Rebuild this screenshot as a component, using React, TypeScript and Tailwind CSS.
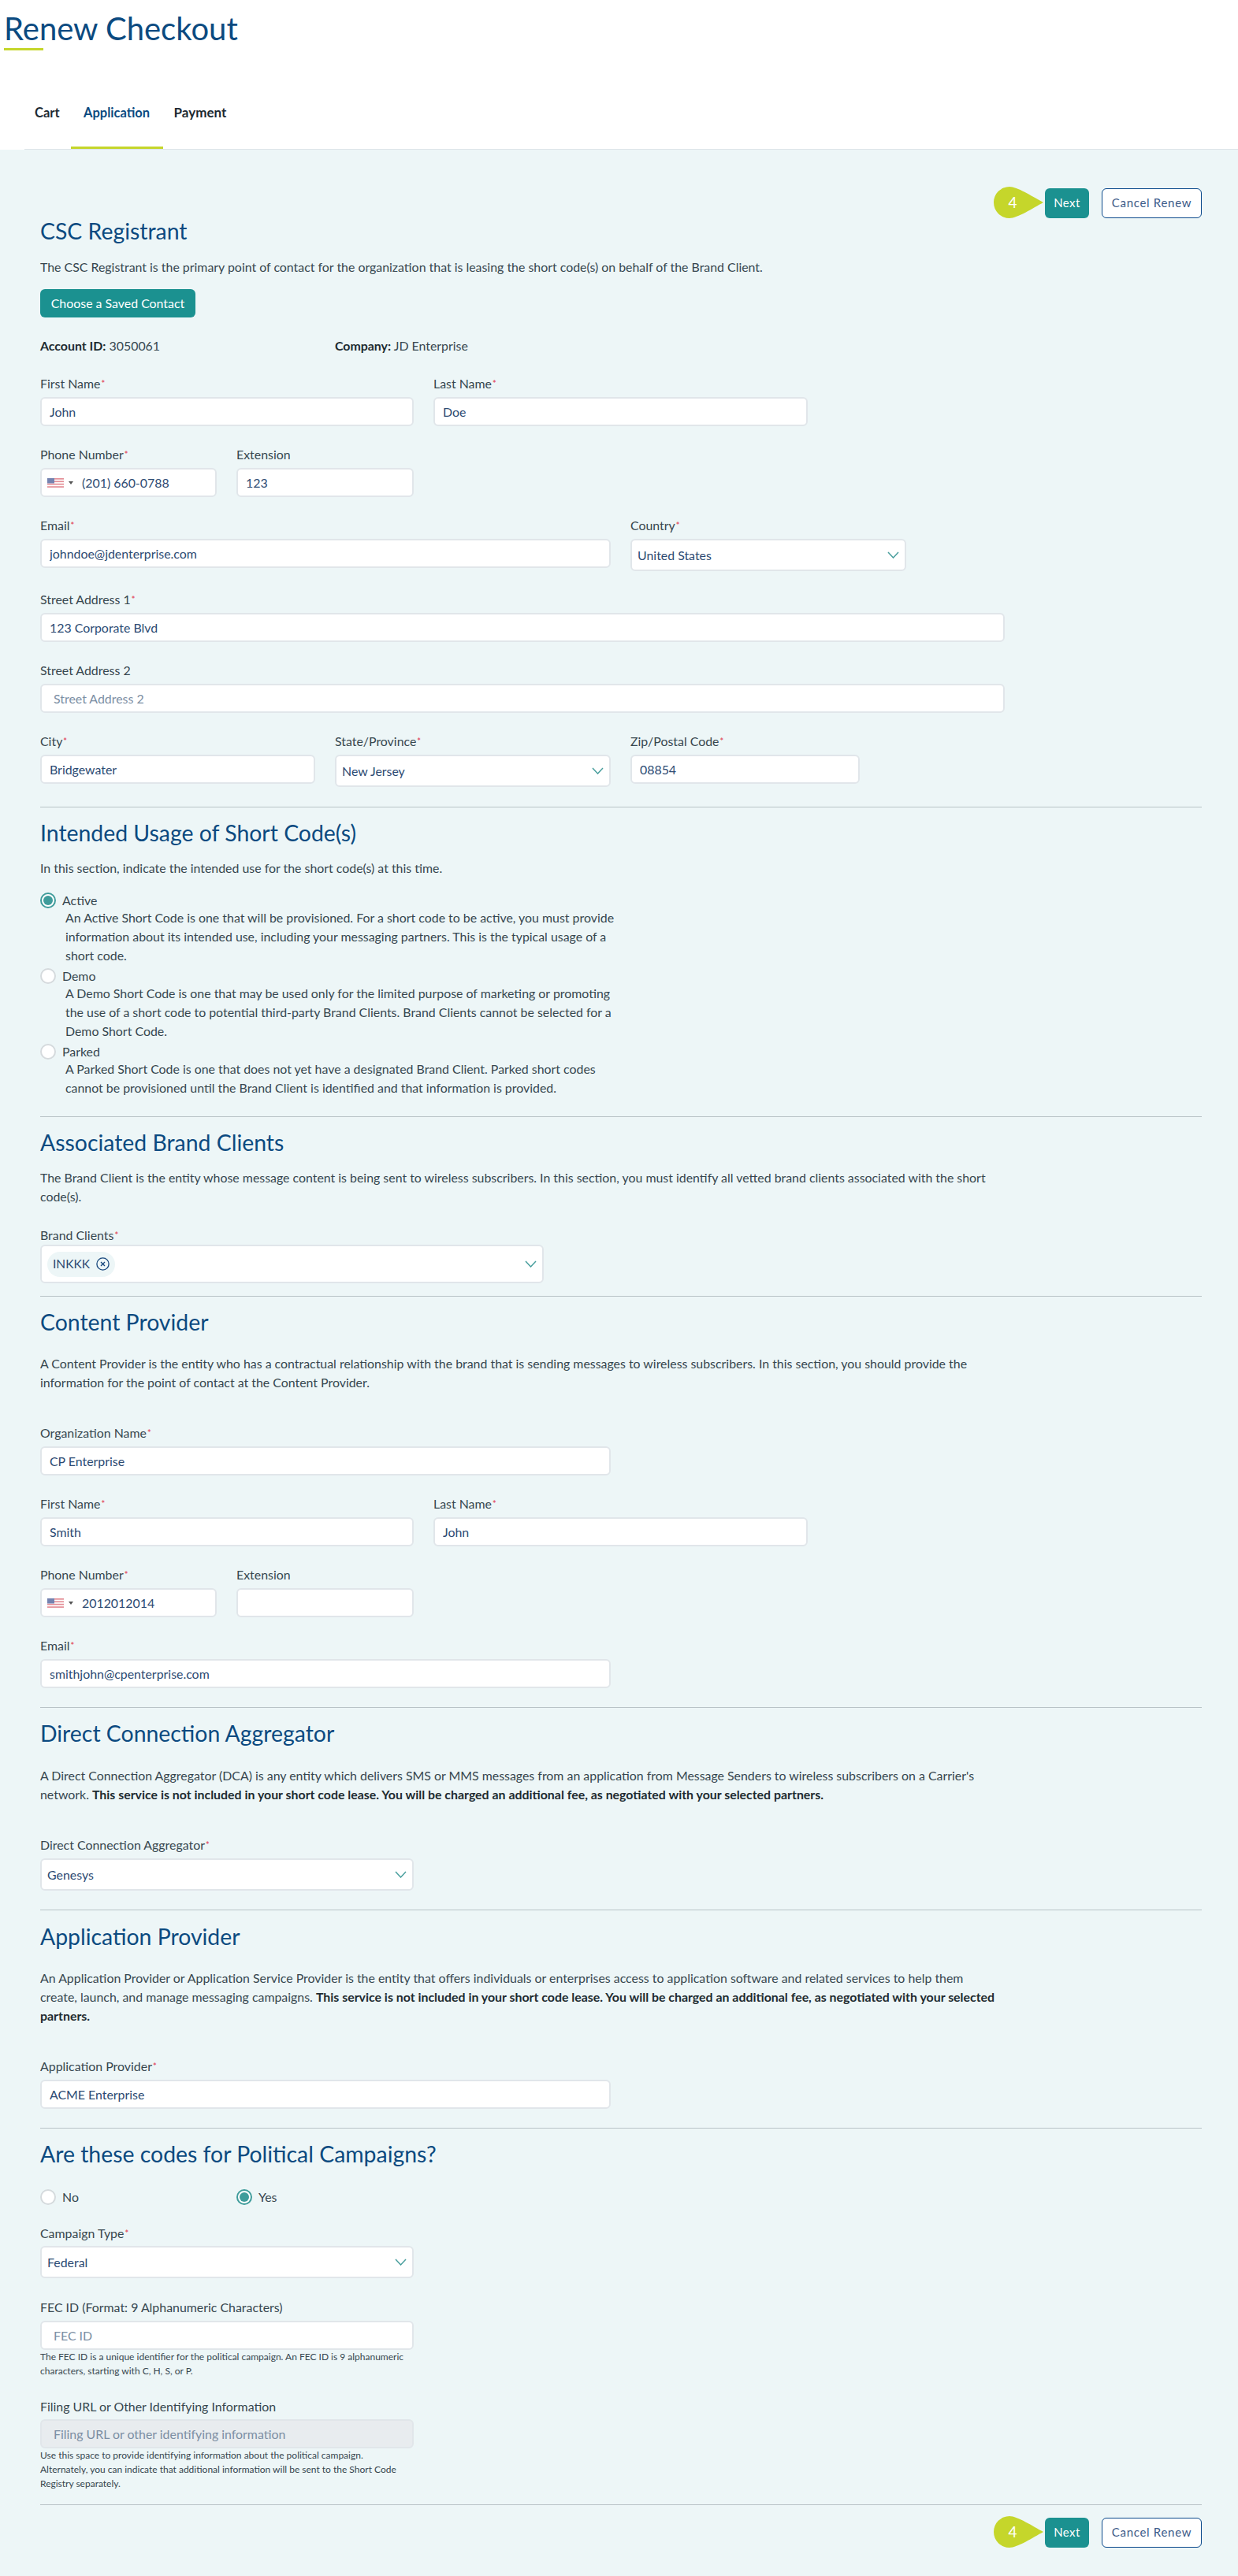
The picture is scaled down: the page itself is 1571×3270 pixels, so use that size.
import React from "react";

const Req = () => <span className="text-[#e2566b] text-[11px] font-bold align-[2px] ml-[1px]">*</span>;

function Chevron() {
  return (
    <svg width="15" height="9" viewBox="0 0 15 9" fill="none" className="shrink-0">
      <polyline points="1,1 7.5,8 14,1" stroke="#4a9f9e" strokeWidth="1.5" />
    </svg>
  );
}

function Label({ text, req, gap = "mb-[7px]" }: { text: string; req?: boolean; gap?: string }) {
  return (
    <div className={`h-5 leading-5 text-[15.9px] text-[#37474f] whitespace-nowrap ${gap}`}>
      {text}
      {req && <Req />}
    </div>
  );
}

function Input({ value, placeholder, disabled }: { value?: string; placeholder?: string; disabled?: boolean }) {
  return (
    <input
      readOnly
      value={value ?? ""}
      placeholder={placeholder}
      className={`block w-full h-[37px] rounded-[6px] border-2 border-[#e1e6ea] text-[15.9px] text-[#2c4a72] outline-none placeholder:text-[#7c8ea3] ${
        placeholder ? "pl-[15px]" : "pl-[10px]"
      } ${disabled ? "bg-[#e8ecef]" : "bg-white"}`}
    />
  );
}

function Select({ value }: { value: string }) {
  return (
    <div className="flex items-center justify-between h-[41px] rounded-[6px] border-2 border-[#e1e6ea] bg-white pl-[7px] pr-[7px] text-[15.9px] text-[#2c4a72]">
      <span>{value}</span>
      <Chevron />
    </div>
  );
}

function Phone({ value }: { value: string }) {
  return (
    <div className="flex items-center h-[37px] rounded-[6px] border-2 border-[#e1e6ea] bg-white pl-[7px] text-[15.9px] text-[#2c4a72]">
      <svg width="21" height="12" viewBox="0 0 21 12" className="shrink-0 opacity-70">
        <rect width="21" height="12" fill="#fff" />
        <rect width="21" height="1.7" y="0" fill="#d9606c" />
        <rect width="21" height="1.7" y="3.4" fill="#d9606c" />
        <rect width="21" height="1.7" y="6.8" fill="#d9606c" />
        <rect width="21" height="1.7" y="10.2" fill="#d9606c" />
        <rect width="9" height="6.5" fill="#3c4f8f" />
      </svg>
      <svg width="6" height="4" viewBox="0 0 6 4" className="ml-[6px] shrink-0">
        <polygon points="0,0 6,0 3,4" fill="#555" />
      </svg>
      <span className="ml-[11px]">{value}</span>
    </div>
  );
}

function Field({ w, label, req, children }: { w: string; label: string; req?: boolean; children: React.ReactNode }) {
  return (
    <div className={w}>
      <Label text={label} req={req} />
      {children}
    </div>
  );
}

function Row({ children, mb = "mb-[26px]" }: { children: React.ReactNode; mb?: string }) {
  return <div className={`flex items-start gap-[25px] ${mb}`}>{children}</div>;
}

function Divider({ mt = "" }: { mt?: string }) {
  return <div className={`h-px bg-[#b9c3c7] ${mt}`} />;
}

function Heading({ children, mt = "mt-[17px]" }: { children: React.ReactNode; mt?: string }) {
  return <h2 className={`h-[30px] leading-[30px] text-[28.4px] text-[#0b4a80] whitespace-nowrap ${mt}`}>{children}</h2>;
}

function Para({ children, mt }: { children: React.ReactNode; mt: string }) {
  return <p className={`leading-6 text-[15.9px] text-[#37474f] whitespace-nowrap ${mt}`}>{children}</p>;
}

function Radio({ on }: { on?: boolean }) {
  return (
    <span
      className={`flex items-center justify-center w-5 h-5 rounded-full border-2 bg-white shrink-0 ${
        on ? "border-[#3f9c9b]" : "border-[#d5dadd]"
      }`}
    >
      {on && <span className="block w-3 h-3 rounded-full bg-[#3f9c9b]" />}
    </span>
  );
}

function RadioLine({ label, on, children, mt = "" }: { label: string; on?: boolean; children: React.ReactNode; mt?: string }) {
  return (
    <div className={mt}>
      <div className="flex items-center h-[21px] gap-2 text-[15.9px] text-[#37474f]">
        <Radio on={on} />
        <span>{label}</span>
      </div>
      <p className="pl-[32px] leading-6 text-[15.9px] text-[#37474f] whitespace-nowrap">{children}</p>
    </div>
  );
}

function Actions({ mt }: { mt: string }) {
  return (
    <div className={`flex justify-end items-center ${mt}`}>
      <div className="relative w-[63px] h-10 mr-[2px] -mt-[1px]">
        <svg width="63" height="40" viewBox="0 0 63 40">
          <path d="M20 0 C30 0 50 13 63 20 C50 27 30 40 20 40 A20 20 0 0 1 20 0 Z" fill="#c5d62b" />
        </svg>
        <span className="absolute left-[17px] top-0 w-[14px] h-10 leading-10 text-center text-[19px] text-white">4</span>
      </div>
      <button className="w-14 h-[38px] rounded-[6px] bg-[#1b9190] text-white text-[15px] tracking-[0.4px]">Next</button>
      <button className="w-[127px] h-[38px] ml-4 rounded-[6px] border border-[#0b4a8c] bg-white text-[#3c5a88] text-[15px] tracking-[0.7px]">
        Cancel Renew
      </button>
    </div>
  );
}

export default function App() {
  return (
    <div className="w-[1571px] bg-white font-['Lato','Liberation_Sans',sans-serif]">
      <header className="h-[190px] pt-3">
        <h1 className="pl-[5px] h-12 leading-[48px] text-[40px] text-[#0b4a80] whitespace-nowrap">Renew Checkout</h1>
        <div className="ml-[5px] mt-[1px] w-[50px] h-[3px] bg-[#c5d62b]" />
        <nav className="flex mt-[56px] ml-[31px] h-[70px] border-b border-[#dde4e8]">
          <a className="h-[69px] pt-[11px] pl-[13px] pr-[14px] leading-6 text-[16.5px] font-bold text-[#1c2a33] border-b-[3px] border-transparent">Cart</a>
          <a className="h-[69px] pt-[11px] w-[117px] text-center leading-6 text-[16.5px] font-bold text-[#0b4a80] border-b-[3px] border-[#c5d62b]">Application</a>
          <a className="h-[69px] pt-[11px] px-[14px] leading-6 text-[17px] font-bold text-[#1c2a33] border-b-[3px] border-transparent">Payment</a>
        </nav>
      </header>

      <main className="bg-[#edf6f7] pl-[51px] pr-[46px] pb-[36px]">
        <Actions mt="pt-[48px]" />

        <Heading mt="mt-[1px]">CSC Registrant</Heading>
        <Para mt="mt-[19px]">The CSC Registrant is the primary point of contact for the organization that is leasing the short code(s) on behalf of the Brand Client.</Para>
        <button className="block mt-4 w-[197px] h-9 rounded-[6px] bg-[#1b9190] text-white text-[15.9px]">Choose a Saved Contact</button>
        <div className="flex mt-[26px] h-5 leading-5 text-[15.9px] text-[#37474f]">
          <div className="w-[374px]"><b className="text-[#1d2b30]">Account ID:</b> 3050061</div>
          <div><b className="text-[#1d2b30]">Company:</b> JD Enterprise</div>
        </div>

        <div className="mt-[28px]">
          <Row>
            <Field w="w-[474px]" label="First Name" req><Input value="John" /></Field>
            <Field w="w-[475px]" label="Last Name" req><Input value="Doe" /></Field>
          </Row>
          <Row>
            <Field w="w-[224px]" label="Phone Number" req><Phone value="(201) 660-0788" /></Field>
            <Field w="w-[225px]" label="Extension"><Input value="123" /></Field>
          </Row>
          <Row>
            <Field w="w-[724px]" label="Email" req><Input value="johndoe@jdenterprise.com" /></Field>
            <Field w="w-[350px]" label="Country" req><Select value="United States" /></Field>
          </Row>
          <Row>
            <Field w="w-[1224px]" label="Street Address 1" req><Input value="123 Corporate Blvd" /></Field>
          </Row>
          <Row>
            <Field w="w-[1224px]" label="Street Address 2"><Input placeholder="Street Address 2" /></Field>
          </Row>
          <Row mb="mb-[25px]">
            <Field w="w-[349px]" label="City" req><Input value="Bridgewater" /></Field>
            <Field w="w-[350px]" label="State/Province" req><Select value="New Jersey" /></Field>
            <Field w="w-[291px]" label="Zip/Postal Code" req><Input value="08854" /></Field>
          </Row>
        </div>

        <Divider />
        <Heading>Intended Usage of Short Code(s)</Heading>
        <Para mt="mt-[18px]">In this section, indicate the intended use for the short code(s) at this time.</Para>
        <div className="mt-[18px]">
          <RadioLine label="Active" on>
            An Active Short Code is one that will be provisioned. For a short code to be active, you must provide<br />
            information about its intended use, including your messaging partners. This is the typical usage of a<br />
            short code.
          </RadioLine>
          <RadioLine label="Demo" mt="mt-[3px]">
            A Demo Short Code is one that may be used only for the limited purpose of marketing or promoting<br />
            the use of a short code to potential third-party Brand Clients. Brand Clients cannot be selected for a<br />
            Demo Short Code.
          </RadioLine>
          <RadioLine label="Parked" mt="mt-[3px]">
            A Parked Short Code is one that does not yet have a designated Brand Client. Parked short codes<br />
            cannot be provisioned until the Brand Client is identified and that information is provided.
          </RadioLine>
        </div>

        <Divider mt="mt-[24px]" />
        <Heading>Associated Brand Clients</Heading>
        <Para mt="mt-[18px]">
          The Brand Client is the entity whose message content is being sent to wireless subscribers. In this section, you must identify all vetted brand clients associated with the short<br />
          code(s).
        </Para>
        <div className="mt-[27px] w-[639px]">
          <Label text="Brand Clients" req gap="mb-[2px]" />
          <div className="flex items-center justify-between h-[49px] rounded-[6px] border-2 border-[#e1e6ea] bg-white pl-[7px] pr-[7px]">
            <span className="flex items-center gap-[8px] h-8 px-[7px] rounded-full bg-[#edf6f7] text-[15.5px] text-[#2c4a72]">
              INKKK
              <svg width="17" height="17" viewBox="0 0 17 17" fill="none" stroke="#17467c" strokeWidth="1.3">
                <circle cx="8.5" cy="8.5" r="7.6" />
                <path d="M6 6 L11 11 M11 6 L6 11" />
              </svg>
            </span>
            <Chevron />
          </div>
        </div>

        <Divider mt="mt-[16px]" />
        <Heading>Content Provider</Heading>
        <Para mt="mt-[26px]">
          A Content Provider is the entity who has a contractual relationship with the brand that is sending messages to wireless subscribers. In this section, you should provide the<br />
          information for the point of contact at the Content Provider.
        </Para>
        <div className="mt-[42px]">
          <Row>
            <Field w="w-[724px]" label="Organization Name" req><Input value="CP Enterprise" /></Field>
          </Row>
          <Row>
            <Field w="w-[474px]" label="First Name" req><Input value="Smith" /></Field>
            <Field w="w-[475px]" label="Last Name" req><Input value="John" /></Field>
          </Row>
          <Row>
            <Field w="w-[224px]" label="Phone Number" req><Phone value="2012012014" /></Field>
            <Field w="w-[225px]" label="Extension"><Input /></Field>
          </Row>
          <Row mb="mb-[24px]">
            <Field w="w-[724px]" label="Email" req><Input value="smithjohn@cpenterprise.com" /></Field>
          </Row>
        </div>

        <Divider />
        <Heading>Direct Connection Aggregator</Heading>
        <Para mt="mt-[27px]">
          A Direct Connection Aggregator (DCA) is any entity which delivers SMS or MMS messages from an application from Message Senders to wireless subscribers on a Carrier's<br />
          network. <b className="font-bold text-[#1d2b30]">This service is not included in your short code lease. You will be charged an additional fee, as negotiated with your selected partners.</b>
        </Para>
        <div className="mt-[42px] w-[474px]">
          <Label text="Direct Connection Aggregator" req />
          <Select value="Genesys" />
        </div>

        <Divider mt="mt-[24px]" />
        <Heading mt="mt-[18px]">Application Provider</Heading>
        <Para mt="mt-[26px]">
          An Application Provider or Application Service Provider is the entity that offers individuals or enterprises access to application software and related services to help them<br />
          create, launch, and manage messaging campaigns. <b className="font-bold text-[#1d2b30]">This service is not included in your short code lease. You will be charged an additional fee, as negotiated with your selected<br />
          partners.</b>
        </Para>
        <div className="mt-[42px] w-[724px]">
          <Label text="Application Provider" req />
          <Input value="ACME Enterprise" />
        </div>

        <Divider mt="mt-[24px]" />
        <Heading>Are these codes for Political Campaigns?</Heading>
        <div className="flex mt-[29px] h-[22px] items-center text-[15.9px] text-[#37474f]">
          <div className="flex items-center gap-2 w-[249px]"><Radio /><span>No</span></div>
          <div className="flex items-center gap-2"><Radio on /><span>Yes</span></div>
        </div>
        <div className="mt-[25px] w-[474px]">
          <Label text="Campaign Type" req gap="mb-[6px]" />
          <Select value="Federal" />
        </div>
        <div className="mt-[27px] w-[474px]">
          <Label text="FEC ID (Format: 9 Alphanumeric Characters)" />
          <Input placeholder="FEC ID" />
          <p className="leading-[18px] text-[12px] text-[#37474f] whitespace-nowrap">
            The FEC ID is a unique identifier for the political campaign. An FEC ID is 9 alphanumeric<br />
            characters, starting with C, H, S, or P.
          </p>
        </div>
        <div className="mt-[26px] w-[474px]">
          <Label text="Filing URL or Other Identifying Information" gap="mb-[6px]" />
          <Input placeholder="Filing URL or other identifying information" disabled />
          <p className="leading-[18px] text-[12px] text-[#37474f] whitespace-nowrap">
            Use this space to provide identifying information about the political campaign.<br />
            Alternately, you can indicate that additional information will be sent to the Short Code<br />
            Registry separately.
          </p>
        </div>

        <Divider mt="mt-[17px]" />
        <Actions mt="mt-[15px]" />
      </main>
    </div>
  );
}
